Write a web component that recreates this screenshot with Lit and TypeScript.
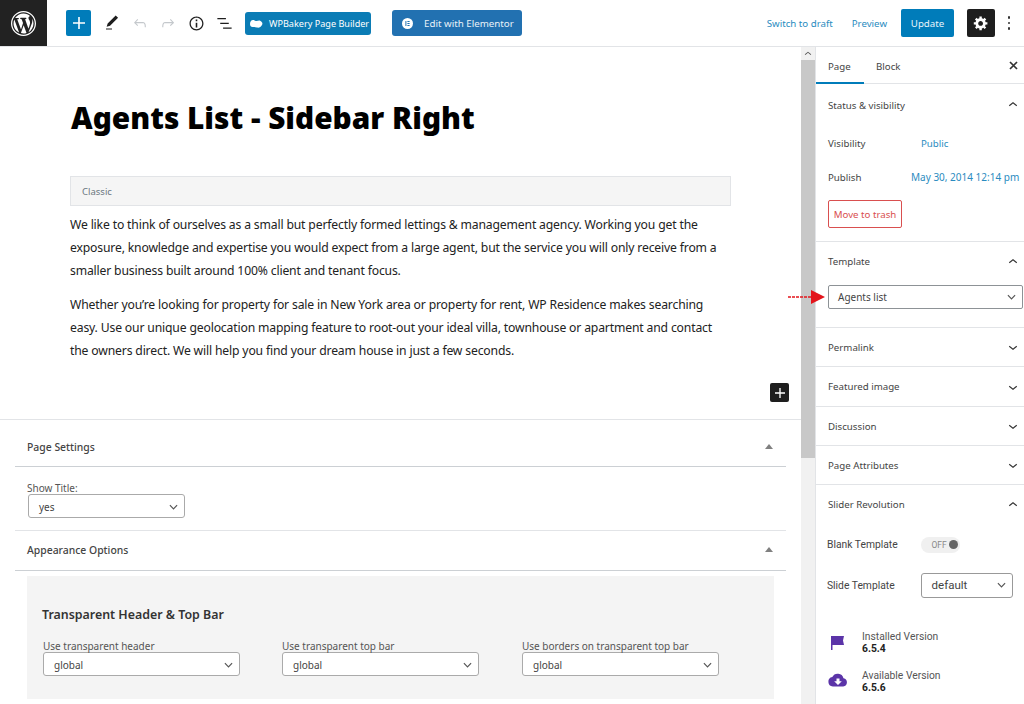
import { LitElement, css, html, svg } from 'lit'
import { customElement } from 'lit/decorators.js'

const icon = (d: string, size = 24, box = 24) => html`
  <svg width=${size} height=${size} viewBox="0 0 ${box} ${box}" fill="currentColor">${svg`<path d=${d}></path>`}</svg>
`

const WP =
  'M20 10c0-5.52-4.48-10-10-10S0 4.48 0 10s4.48 10 10 10 10-4.48 10-10zM10 1.01c4.97 0 8.99 4.02 8.99 8.99s-4.02 8.99-8.99 8.99S1.01 14.97 1.01 10 5.03 1.01 10 1.01zM8.01 14.82L4.96 6.61c.49-.03 1.05-.08 1.05-.08.43-.05.38-1.01-.06-.99 0 0-1.29.1-2.13.1-.15 0-.33 0-.52-.01 1.44-2.17 3.9-3.6 6.7-3.6 2.09 0 3.99.79 5.41 2.09-.6-.08-1.45.35-1.45 1.42 0 .66.38 1.22.79 1.88.31.54.5 1.22.5 2.21 0 1.34-1.27 4.48-1.27 4.48l-2.71-7.5c.48-.03.75-.16.75-.16.43-.05.38-1.1-.05-1.08 0 0-1.3.11-2.14.11-.78 0-2.11-.11-2.11-.11-.43-.02-.48 1.06-.05 1.08l.84.08 1.12 3.04zm6.02 2.15L16.64 10s.67-1.69.39-3.81c.63 1.14.94 2.42.94 3.81 0 2.96-1.56 5.58-3.94 6.97zM2.68 6.77L6.5 17.25c-2.67-1.3-4.47-4.08-4.47-7.25 0-1.16.2-2.23.65-3.23zm7.45 4.53l2.29 6.25c-.75.27-1.57.42-2.42.42-.72 0-1.41-.11-2.06-.3z'
const PLUS = 'M18 11.2h-5.2V6h-1.6v5.2H6v1.6h5.2V18h1.6v-5.2H18z'
const PENCIL = 'M20.1 5.1L16.9 2 6.2 12.7l-1.3 4.4 4.5-1.3L20.1 5.1zM4 20.8h8v-1.5H4v1.5z'
const UNDO = 'M18.3 11.7c-.6-.6-1.4-.9-2.3-.9H6.7l2.9-3.3-1.1-1-4.5 5L8.5 16l1-1-2.7-2.7H16c.5 0 .9.2 1.3.5 1 1 1 3.4 1 4.5v.3h1.5v-.2c0-1.5 0-4.3-1.5-5.7z'
const REDO = 'M15.6 6.5l-1.1 1 2.9 3.3H8c-.9 0-1.7.3-2.3.9-1.4 1.5-1.4 4.2-1.4 5.6v.2h1.5v-.3c0-1.1 0-3.5 1-4.5.3-.3.7-.5 1.3-.5h9.2L14.5 15l1.1 1.1 4.6-4.6-4.6-5z'
const INFO = 'M12 3.2c-4.8 0-8.8 3.9-8.8 8.8 0 4.8 3.9 8.8 8.8 8.8 4.8 0 8.8-3.9 8.8-8.8 0-4.8-4-8.8-8.8-8.8zm0 16c-4 0-7.2-3.3-7.2-7.2C4.8 8 8 4.8 12 4.8s7.2 3.3 7.2 7.2c0 4-3.2 7.2-7.2 7.2zM11 17h2v-6h-2v6zm0-8h2V7h-2v2z'
const LIST = 'M13.8 5.2H3v1.5h10.8V5.2zm-3.6 12v1.5H21v-1.5H10.2zm7.2-6H6.6v1.5h10.8v-1.5z'
const GEAR = 'M18 12h-2.18c-.17.7-.44 1.35-.81 1.93l1.54 1.54-2.1 2.1-1.54-1.54c-.58.36-1.23.63-1.91.79V19H8v-2.18c-.68-.16-1.33-.43-1.91-.79l-1.54 1.54-2.12-2.12 1.54-1.54c-.36-.58-.63-1.23-.79-1.91H1V9.03h2.17c.16-.7.44-1.35.8-1.94L2.43 5.55l2.1-2.1 1.54 1.54c.58-.37 1.24-.64 1.93-.81V2h3v2.18c.68.16 1.33.43 1.91.79l1.54-1.54 2.12 2.12-1.54 1.54c.36.59.64 1.24.8 1.94H18V12zm-8.5 1.5c1.66 0 3-1.34 3-3s-1.34-3-3-3-3 1.34-3 3 1.34 3 3 3z'
const UP = 'M6.5 12.4L12 8l5.5 4.4-.9 1.2L12 10l-4.5 3.6-1-1.2z'
const DOWN = 'M17.5 11.6L12 16l-5.5-4.4.9-1.2L12 14l4.5-3.6 1 1.2z'
const FLAG = 'M1 0h13l-1 4.500 1 4.500H2.500V14H1z'
const CLOUD = 'M15.5 6.2A6 6 0 0 0 4.300 5 4.800 4.800 0 0 0 4.800 14.500h10.400a4.200 4.200 0 0 0 .3-8.300zM10 13l-3.800-3.800h2.300V6.500h3v2.700h2.300z'

const chevron = html`
  <svg class="chev" width="9" height="6" viewBox="0 0 10 6"><path d="M1 1l4 4 4-4" fill="none" stroke="#555" stroke-width="1.3"></path></svg>
`

@customElement('app-root')
export class AppRoot extends LitElement {
  static styles = css`
    :host {
      display: block;
      width: 1024px;
      height: 704px;
      overflow: hidden;
      background: #fff;
      font-family: 'Noto Sans', 'Open Sans', sans-serif;
      color: #444;
    }
    svg {
      display: block;
      flex: none;
    }

    /* top bar */
    .top {
      height: 46px;
      border-bottom: 1px solid #e2e4e7;
      display: flex;
      align-items: center;
    }
    .logo {
      width: 47px;
      height: 46px;
      background: #222;
      color: #fff;
      display: flex;
      align-items: center;
      justify-content: center;
      margin-right: 19px;
    }
    .add {
      width: 25px;
      height: 26px;
      border-radius: 2px;
      background: #007cba;
      color: #fff;
      display: flex;
      align-items: center;
      justify-content: center;
      margin-right: 2px;
    }
    .tool {
      width: 28px;
      height: 28px;
      display: flex;
      align-items: center;
      justify-content: center;
      color: #1e1e1e;
    }
    .tool.first {
      margin-left: 5px;
    }
    .tool.off {
      color: #c4c8cc;
    }
    .bakery {
      margin-left: 7px;
      width: 126px;
      height: 23px;
      border-radius: 3px;
      background: #0b7cb5;
      color: #fff;
      font-size: 9.1px;
      display: flex;
      align-items: center;
      box-sizing: border-box;
      padding: 1px 0 0 4px;
      gap: 6px;
      white-space: nowrap;
    }
    .elementor {
      margin-left: 21px;
      width: 130px;
      height: 26px;
      border-radius: 3px;
      background: #2271b1;
      color: #e9f2f8;
      font-size: 9.75px;
      display: flex;
      align-items: center;
      box-sizing: border-box;
      padding-left: 10px;
      gap: 11px;
      white-space: nowrap;
    }
    .el-dot {
      width: 11px;
      height: 11px;
    }
    .right {
      margin-left: auto;
      display: flex;
      align-items: center;
      font-size: 9.7px;
      color: #2a8bc0;
    }
    .link-a {
      margin-right: 19px;
      padding-top: 1px;
    }
    .link-b {
      margin-right: 14px;
      padding-top: 1px;
    }
    .update {
      width: 53px;
      height: 28px;
      border-radius: 2px;
      background: #007cba;
      color: #e8f4fa;
      display: flex;
      align-items: center;
      justify-content: center;
      margin-right: 13px;
      padding-top: 1px;
      box-sizing: border-box;
    }
    .gear {
      width: 28px;
      height: 28px;
      border-radius: 2px;
      background: #1e1e1e;
      color: #fff;
      display: flex;
      align-items: center;
      justify-content: center;
      margin-right: 2px;
    }
    .dots {
      width: 24px;
      margin-right: 3px;
      display: flex;
      flex-direction: column;
      align-items: center;
      gap: 3px;
    }
    .dots i {
      width: 2.5px;
      height: 2.5px;
      background: #333;
      border-radius: 50%;
    }

    /* body */
    .body {
      display: flex;
      height: 657px;
    }
    .main {
      width: 801px;
      flex: none;
      overflow: hidden;
    }
    .canvas {
      height: 372px;
      border-bottom: 1px solid #e2e4e7;
      position: relative;
    }
    h1 {
      margin: 0;
      padding: 50px 0 0 71px;
      font-size: 29.8px;
      line-height: 42px;
      font-weight: 900;
      color: #000;
      white-space: nowrap;
    }
    .classic {
      margin: 37px 70px 0 70px;
      height: 28px;
      border: 1px solid #e2e4e7;
      background: #f5f5f5;
      color: #6c7781;
      font-size: 9.5px;
      line-height: 30px;
      padding-left: 11px;
    }
    .copy {
      margin: 7px 0 0 70px;
      font-size: 12.2px;
      letter-spacing: -0.165px;
      line-height: 23px;
      color: #222;
      white-space: nowrap;
    }
    .copy p {
      margin: 0 0 11px;
    }
    .inserter {
      position: absolute;
      left: 770px;
      top: 336px;
      width: 19px;
      height: 19px;
      border-radius: 2px;
      background: #1e1e1e;
      color: #fff;
      display: flex;
      align-items: center;
      justify-content: center;
    }
    .meta {
      margin: 0 15px;
      width: 771px;
      font-size: 10px;
    }
    .meta-head {
      height: 47px;
      border-bottom: 1px solid #ccd0d4;
      box-sizing: border-box;
      display: flex;
      align-items: center;
      justify-content: space-between;
      padding: 7px 13px 0 12px;
      font-size: 10.4px;
      font-weight: 500;
      color: #444;
    }
    .tri {
      width: 0;
      height: 0;
      border-left: 4px solid transparent;
      border-right: 4px solid transparent;
      border-bottom: 5px solid #808080;
    }
    .meta-row {
      height: 64px;
      border-bottom: 1px solid #e2e4e7;
      box-sizing: border-box;
      padding: 15px 0 0 12px;
      line-height: 12px;
      color: #555;
    }
    .sel {
      display: flex;
      align-items: center;
      justify-content: space-between;
      box-sizing: border-box;
      width: 197px;
      height: 24px;
      background: #fff;
      border: 1px solid #aaa;
      border-radius: 3px;
      padding: 1px 6px 0 10px;
      color: #444;
      font-size: 10px;
      white-space: nowrap;
    }
    .short {
      width: 157px;
      margin-left: 1px;
    }
    .head2 {
      height: 40px;
      padding-top: 0;
      padding-bottom: 2px;
      margin-bottom: 5px;
    }
    .box {
      margin: 0 12px;
      height: 123px;
      box-sizing: border-box;
      background: #f4f4f4;
      padding: 29px 16px 0;
    }
    .box h3 {
      margin: 0 0 15px -1px;
      font-size: 12.4px;
      line-height: 20px;
      font-weight: 600;
      color: #333;
    }
    .cols {
      display: flex;
      gap: 42px;
    }
    .cols label {
      display: block;
      width: 197px;
      line-height: 12px;
      color: #555;
      white-space: nowrap;
    }
    .cols label:last-child {
      margin-left: 1px;
    }

    /* scrollbar */
    .bar {
      width: 14px;
      flex: none;
      background: #f1f1f1;
      display: flex;
      flex-direction: column;
    }
    .bar-up {
      height: 13px;
      display: flex;
      align-items: center;
      justify-content: center;
      color: #555;
    }
    .thumb {
      height: 398px;
      background: #c8c8c8;
    }

    /* sidebar */
    .side {
      flex: 1;
      min-width: 0;
      border-left: 1px solid #e2e4e7;
      font-size: 9.7px;
      color: #444;
      white-space: nowrap;
    }
    .tabs {
      height: 37px;
      border-bottom: 1px solid #e2e4e7;
      box-sizing: border-box;
      display: flex;
      align-items: center;
    }
    .tab {
      height: 36px;
      width: 48px;
      box-sizing: border-box;
      padding-left: 12px;
      line-height: 40px;
    }
    .tab.on {
      box-shadow: inset 0 -2px 0 #007cba;
      height: 37px;
    }
    .x {
      margin-left: auto;
      margin-right: 6px;
      color: #333;
    }
    .panel {
      border-bottom: 1px solid #e2e4e7;
      padding: 0 2px 0 12px;
    }
    .ph {
      display: flex;
      align-items: center;
      justify-content: space-between;
      height: 38px;
    }
    .ph.tall {
      height: 39px;
    }
    .ph.first {
      height: 42px;
    }
    .ph svg {
      color: #333;
    }
    .row {
      display: flex;
      align-items: center;
      height: 34px;
    }
    .row span:first-child {
      width: 93px;
    }
    .val {
      color: #2a8bc0;
    }
    .val.far {
      margin-left: -10px;
      font-size: 10px;
    }
    .trash {
      width: 74px;
      height: 28px;
      border: 1px solid #d94f4f;
      border-radius: 2px;
      box-sizing: border-box;
      color: #d94f4f;
      display: flex;
      align-items: center;
      justify-content: center;
      margin: 6px 0 13px;
    }
    .tpl {
      position: relative;
      margin-right: -2px;
      height: 46px;
      box-sizing: border-box;
      padding-top: 4px;
    }
    .tpl .sel {
      width: 195px;
      height: 24px;
      border-color: #8d9296;
      border-radius: 2px;
      padding: 0 6px 0 9px;
    }
    .arrow {
      position: absolute;
      left: -40px;
      top: 9px;
    }
    .slider {
      padding: 0 2px 0 12px;
    }
    .sr-row {
      display: flex;
      align-items: center;
      height: 41px;
      font-family: Roboto, sans-serif;
      font-size: 10.3px;
      margin-left: -1px;
    }
    .toggle {
      margin-left: 23px;
      width: 39px;
      height: 16px;
      border-radius: 8px;
      background: #f0f0f0;
      display: flex;
      align-items: center;
      justify-content: flex-end;
      gap: 2px;
      padding-right: 2px;
      box-sizing: border-box;
      font-size: 8.5px;
      color: #888;
    }
    .toggle i {
      width: 9px;
      height: 9px;
      background: #666;
      border-radius: 50%;
    }
    .sr-sel {
      margin-left: 26px;
      width: 92px;
      height: 25px;
      font-size: 11.5px;
      padding: 0 6px 2px 10px;
      border-color: #999;
      font-family: Roboto, sans-serif;
    }
    .gap {
      height: 17px;
    }
    .ver {
      display: flex;
      align-items: center;
      font-family: Roboto, sans-serif;
      font-size: 10.3px;
      line-height: 12px;
      color: #555;
      height: 39px;
    }
    .ver b {
      display: block;
      color: #222;
      font-weight: 700;
    }
    .ver .ic {
      width: 34px;
      box-sizing: border-box;
      color: #5b34a8;
      flex: none;
    }
    .ver .ic.flag {
      padding-left: 2px;
    }
  `

  render() {
    return html`
      <div class="top">
        <div class="logo">${icon(WP, 25, 20)}</div>
        <div class="add">${icon(PLUS, 24)}</div>
        <div class="tool first">${icon(PENCIL, 18)}</div>
        <div class="tool off">${icon(UNDO, 18)}</div>
        <div class="tool off">${icon(REDO, 18)}</div>
        <div class="tool">${icon(INFO, 19)}</div>
        <div class="tool">${icon(LIST, 19)}</div>
        <div class="bakery">
          <svg width="14" height="10" viewBox="0 0 14 10"><path d="M1 5c0-2 1-4 3-4 1.500 0 2 1 3.500 1S10 1 11.500 2 14 4 13 6s-3 3-5 2.500S5 8 3.500 8 1 7 1 5z" fill="#fff"></path></svg>
          <span>WPBakery Page Builder</span>
        </div>
        <div class="elementor">
          <svg class="el-dot" viewBox="0 0 11 11">
            <circle cx="5.500" cy="5.500" r="5.500" fill="#fff"></circle>
            <path d="M3.400 3h1v5h-1zM5.400 3h2.200v1H5.400zM5.400 5h2.200v1H5.400zM5.400 7h2.200v1H5.400z" fill="#2271b1"></path>
          </svg>
          <span>Edit with Elementor</span>
        </div>
        <div class="right">
          <span class="link-a">Switch to draft</span>
          <span class="link-b">Preview</span>
          <span class="update">Update</span>
          <span class="gear">${icon(GEAR, 16, 20)}</span>
          <span class="dots"><i></i><i></i><i></i></span>
        </div>
      </div>
      <div class="body">
        <div class="main">
          <div class="canvas">
            <h1>Agents List - Sidebar Right</h1>
            <div class="classic">Classic</div>
            <div class="copy">
              <p>
                We like to think of ourselves as a small but perfectly formed lettings &amp; management agency. Working you get the<br />
                exposure, knowledge and expertise you would expect from a large agent, but the service you will only receive from a<br />
                smaller business built around 100% client and tenant focus.
              </p>
              <p>
                Whether you’re looking for property for sale in New York area or property for rent, WP Residence makes searching<br />
                easy. Use our unique geolocation mapping feature to root-out your ideal villa, townhouse or apartment and contact<br />
                the owners direct. We will help you find your dream house in just a few seconds.
              </p>
            </div>
            <div class="inserter">${icon(PLUS, 20)}</div>
          </div>
          <div class="meta">
            <div class="meta-head"><span>Page Settings</span><i class="tri"></i></div>
            <div class="meta-row">
              Show Title:
              <div class="sel short"><span>yes</span>${chevron}</div>
            </div>
            <div class="meta-head head2"><span>Appearance Options</span><i class="tri"></i></div>
            <div class="box">
              <h3>Transparent Header &amp; Top Bar</h3>
              <div class="cols">
                <label>Use transparent header<div class="sel"><span>global</span>${chevron}</div></label>
                <label>Use transparent top bar<div class="sel"><span>global</span>${chevron}</div></label>
                <label>Use borders on transparent top bar<div class="sel"><span>global</span>${chevron}</div></label>
              </div>
            </div>
          </div>
        </div>
        <div class="bar">
          <div class="bar-up">${icon(UP, 14)}</div>
          <div class="thumb"></div>
        </div>
        <div class="side">
          <div class="tabs">
            <div class="tab on">Page</div>
            <div class="tab">Block</div>
            <div class="x">
              <svg width="9" height="9" viewBox="0 0 9 9"><path d="M1 1l7 7M8 1L1 8" stroke="currentColor" stroke-width="1.700" fill="none"></path></svg>
            </div>
          </div>
          <div class="panel">
            <div class="ph first"><span>Status &amp; visibility</span>${icon(UP, 18)}</div>
            <div class="row"><span>Visibility</span><span class="val">Public</span></div>
            <div class="row"><span>Publish</span><span class="val far">May 30, 2014 12:14 pm</span></div>
            <div class="trash">Move to trash</div>
          </div>
          <div class="panel">
            <div class="ph tall"><span>Template</span>${icon(UP, 18)}</div>
            <div class="tpl">
              <svg class="arrow" width="37" height="14" viewBox="0 0 37 14">
                <path d="M0 7h24" stroke="#e3141b" stroke-width="1.500" stroke-dasharray="3 1" fill="none"></path>
                <path d="M23 0l14 7-14 7z" fill="#e3141b"></path>
              </svg>
              <div class="sel"><span>Agents list</span>${chevron}</div>
            </div>
          </div>
          <div class="panel"><div class="ph"><span>Permalink</span>${icon(DOWN, 18)}</div></div>
          <div class="panel"><div class="ph tall"><span>Featured image</span>${icon(DOWN, 18)}</div></div>
          <div class="panel"><div class="ph"><span>Discussion</span>${icon(DOWN, 18)}</div></div>
          <div class="panel"><div class="ph"><span>Page Attributes</span>${icon(DOWN, 18)}</div></div>
          <div class="slider">
            <div class="ph tall"><span>Slider Revolution</span>${icon(UP, 18)}</div>
            <div class="sr-row"><span>Blank Template</span><span class="toggle">OFF<i></i></span></div>
            <div class="sr-row"><span>Slide Template</span><div class="sel sr-sel"><span>default</span>${chevron}</div></div>
            <div class="gap"></div>
            <div class="ver">
              <span class="ic flag">${icon(FLAG, 14, 14)}</span>
              <span>Installed Version<b>6.5.4</b></span>
            </div>
            <div class="ver">
              <span class="ic">${icon(CLOUD, 20, 20)}</span>
              <span>Available Version<b>6.5.6</b></span>
            </div>
          </div>
        </div>
      </div>
    `
  }
}
